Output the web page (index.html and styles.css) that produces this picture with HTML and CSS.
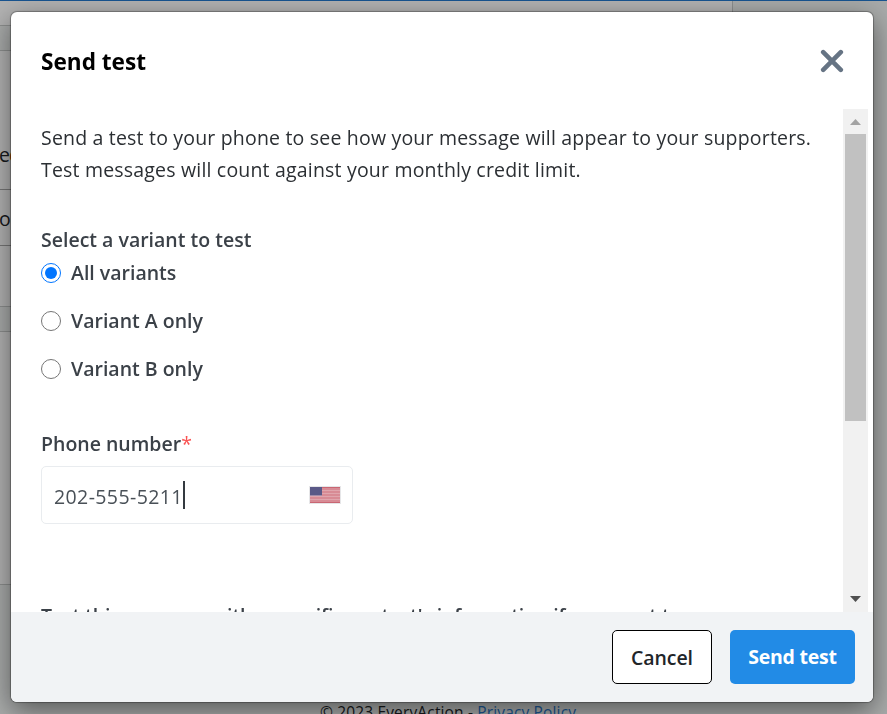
FILE: index.html
```
<!DOCTYPE html>
<html lang="en">
<head>
    <meta charset="UTF-8">
    <meta name="viewport" content="width=device-width, initial-scale=1.0">
    <title>Send test</title>
    <link rel="stylesheet" href="styles.css">
</head>
<body>

    <div class="page">
        <div class="panel">
            <div class="panel-row row-top"></div>
            <div class="panel-row row-gap"></div>
            <div class="panel-row row-heading">e<span class="required-mark">c</span></div>
            <div class="panel-row row-field">o</div>
            <div class="panel-row row-blank"></div>
            <div class="panel-row row-gap"></div>
            <div class="panel-row row-last"></div>
        </div>
        <div class="page-footer">© 2023 EveryAction - <a href="#">Privacy Policy</a></div>
    </div>

    <div class="backdrop">
        <div class="modal">
            <div class="modal-header">
                <h1>Send test</h1>
                <button type="button" class="close-button" aria-label="Close">
                    <svg width="24" height="24" viewBox="0 0 24 24">
                        <path d="M3.2 3.2L20.8 20.8M20.8 3.2L3.2 20.8" stroke="#667484" stroke-width="4.6" stroke-linecap="round"/>
                    </svg>
                </button>
            </div>

            <div class="modal-body">
                <form class="content">
                    <p class="intro">Send a test to your phone to see how your message will appear to your supporters.<br>Test messages will count against your monthly credit limit.</p>

                    <div class="label variant-label">Select a variant to test</div>
                    <label class="option"><input type="radio" name="variant" checked><span>All variants</span></label>
                    <label class="option"><input type="radio" name="variant"><span>Variant A only</span></label>
                    <label class="option"><input type="radio" name="variant"><span>Variant B only</span></label>

                    <div class="label phone-label">Phone number<span class="asterisk">*</span></div>
                    <div class="phone-field">
                        <span class="phone-value">202-555-5211</span>
                        <span class="caret"></span>
                        <svg class="flag" width="32" height="18" viewBox="0 0 32 18">
                            <rect width="32" height="18" fill="#e6e6e8"/>
                            <rect x="1" y="1" width="30" height="16" fill="#d88b95"/>
                            <path d="M1 1.5H31M1 16.5H31" stroke="#c96673"/>
                            <path d="M13 4.5H31M13 7.5H31M1 10.5H31M1 13.5H31" stroke="#e0a5ad"/>
                            <rect x="1" y="1" width="12" height="8" fill="#5a5987"/>
                            <path d="M1 9.5H13" stroke="#a18daa"/>
                        </svg>
                    </div>

                    <div class="label contact-label">Test this message with a specific contact's information if you want to</div>
                </form>

                <div class="scrollbar">
                    <svg class="arrow" width="25" height="25" viewBox="0 0 25 25"><path d="M7 16L12.5 10L18 16Z" fill="#a3a3a3"/></svg>
                    <div class="thumb"></div>
                    <svg class="arrow arrow-down" width="25" height="25" viewBox="0 0 25 25"><path d="M7 9L12.5 15L18 9Z" fill="#505050"/></svg>
                </div>
            </div>

            <div class="modal-footer">
                <button type="button" class="button cancel">Cancel</button>
                <button type="button" class="button send">Send test</button>
            </div>
        </div>
    </div>

</body>
</html>
```
FILE: styles.css
```
* {
    box-sizing: border-box;
}

body {
    font-family: "Open Sans", "Noto Sans", sans-serif;
    font-size: 19.5px;
    margin: 0;
    height: 714px;
    overflow: hidden;
    color: #212529;
}

.page {
    height: 714px;
    background-color: #f1f4f3;
    border-top: 1px solid #2278ce;
    overflow: hidden;
}

.panel {
    width: 733px;
    border-right: 1px solid #c8cccc;
}

.panel-row {
    border-bottom: 1px solid #c9cccb;
    background-color: #fff;
    overflow: hidden;
}

.row-top {
    height: 25px;
}

.panel .row-gap {
    height: 25px;
    background-color: #f1f4f3;
}

.row-heading {
    height: 139px;
    padding-top: 90px;
    border-color: #aaa;
    text-indent: -1px;
    letter-spacing: -1px;
}

.required-mark {
    color: #e8590c;
}

.row-field {
    height: 56px;
    padding-top: 15px;
    border-color: #aaa;
    text-indent: -1px;
}

.row-blank {
    height: 61px;
}

.row-last {
    height: 253px;
}

.page-footer {
    margin: 116px 0 0 320px;
    font-size: 15.5px;
    line-height: 22px;
    letter-spacing: 0.15px;
}

.page-footer a {
    color: #2b7bd0;
}

.backdrop {
    position: fixed;
    inset: 0;
    padding: 12px 14px 12px 11px;
    background-color: rgba(0, 0, 0, 0.3);
}

.modal {
    display: flex;
    flex-direction: column;
    width: 862px;
    height: 690px;
    border-radius: 6px;
    background-color: #fff;
    box-shadow: 0 0 1px 1px rgba(0, 0, 0, 0.3), 0 8px 28px rgba(0, 0, 0, 0.5);
    overflow: hidden;
}

.modal-header {
    display: flex;
    justify-content: space-between;
    align-items: center;
    height: 97px;
    padding: 0 29px 0 30px;
}

.modal-header h1 {
    margin: 0;
    padding-top: 2px;
    font-size: 22.6px;
    font-weight: 700;
    color: #000;
}

.close-button {
    display: flex;
    padding: 0;
    border: none;
    background: none;
}

.modal-body {
    display: flex;
    height: 503px;
    padding-right: 5px;
}

.content {
    flex: 1;
    padding: 13px 0 0 30px;
    overflow: hidden;
    white-space: nowrap;
}

.intro {
    margin: 0 0 38px;
    line-height: 32px;
    letter-spacing: 0.19px;
    color: #2b2f33;
}

.label {
    font-weight: 600;
    line-height: 32px;
    color: #3b4148;
}

.option {
    display: flex;
    align-items: center;
    gap: 10px;
    height: 32px;
    margin-bottom: 16px;
    font-weight: 600;
    color: #3b4148;
}

.option input {
    width: 20px;
    height: 20px;
    margin: 1px 0 0;
    accent-color: #0075ff;
}

.phone-label {
    margin-top: 44px;
}

.asterisk {
    color: #fa5252;
    font-weight: 400;
}

.phone-field {
    display: flex;
    align-items: center;
    width: 312px;
    height: 58px;
    margin-top: 6px;
    padding: 0 11px 0 12px;
    border: 1px solid #e9ecef;
    border-radius: 5px;
    color: #495057;
}

.phone-value {
    padding-top: 2px;
    letter-spacing: 0.4px;
}

.caret {
    width: 2px;
    height: 28px;
    background-color: #343a40;
}

.flag {
    margin-left: auto;
}

.contact-label {
    margin-top: 76px;
    letter-spacing: -0.09px;
}

.scrollbar {
    display: flex;
    flex-direction: column;
    align-items: center;
    width: 25px;
    background-color: #f1f1f1;
}

.thumb {
    width: 21px;
    height: 287px;
    background-color: #c1c1c1;
}

.arrow-down {
    margin-top: auto;
}

.modal-footer {
    display: flex;
    justify-content: flex-end;
    align-items: center;
    gap: 18px;
    height: 90px;
    padding-right: 18px;
    background-color: #f1f3f5;
}

.button {
    height: 54px;
    padding: 0;
    border-radius: 5px;
    font-family: inherit;
    font-size: 19.5px;
    white-space: nowrap;
}

.cancel {
    width: 100px;
    border: 1px solid #000;
    background-color: #fff;
    color: #212529;
    font-weight: 600;
    letter-spacing: -0.1px;
}

.send {
    width: 125px;
    padding-bottom: 2px;
    border: none;
    background-color: #228be6;
    color: #fff;
    font-weight: 700;
    letter-spacing: -0.25px;
}
```
